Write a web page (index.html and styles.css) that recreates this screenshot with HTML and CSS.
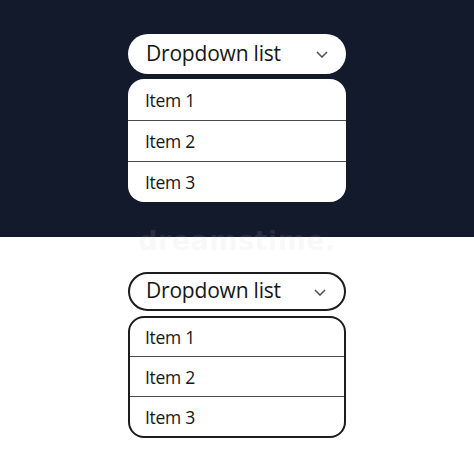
FILE: index.html
```html
<!DOCTYPE html>
<html>
<head>
<meta charset="utf-8">
<link rel="stylesheet" href="styles.css">
</head>
<body>
<div class="page">
  <section class="panel dark">
    <div class="select">
      <span class="label">Dropdown list</span>
      <svg class="chev" width="12" height="7" viewBox="0 0 12 7"><path d="M1 1 L6 6 L11 1" fill="none" stroke="#555" stroke-width="1.6"/></svg>
    </div>
    <ul class="list">
      <li>Item 1</li>
      <li>Item 2</li>
      <li>Item 3</li>
    </ul>
  </section>
  <section class="panel light">
    <div class="select">
      <span class="label">Dropdown list</span>
      <svg class="chev" width="12" height="7" viewBox="0 0 12 7"><path d="M1 1 L6 6 L11 1" fill="none" stroke="#555" stroke-width="1.6"/></svg>
    </div>
    <ul class="list">
      <li>Item 1</li>
      <li>Item 2</li>
      <li>Item 3</li>
    </ul>
  </section>
  <div class="watermark">dreamstime.</div>
</div>
</body>
</html>
```
FILE: styles.css
```css
* { box-sizing: border-box; }
html, body { margin: 0; padding: 0; }
body {
  width: 474px;
  height: 474px;
  overflow: hidden;
  background: #fff;
  font-family: "Open Sans", "Noto Sans", sans-serif;
  color: #161616;
}
.page { position: relative; width: 474px; height: 474px; }
.panel {
  display: flex;
  flex-direction: column;
  align-items: center;
  gap: 5px;
}
.dark {
  background: #131a2b;
  height: 237px;
  padding-top: 34px;
}
.light {
  padding-top: 35px;
  gap: 5px;
}
.select {
  width: 218px;
  height: 40px;
  border-radius: 20px;
  background: #fff;
  display: flex;
  align-items: center;
  justify-content: space-between;
  padding: 0 18px 0 18px;
}
.light .select {
  height: 39px;
  border: 2px solid #1d1d1d;
  padding-left: 16px;
}
.label {
  font-size: 21px;
  letter-spacing: -0.2px;
  line-height: 1;
  margin-top: -2px;
}
.chev { margin-top: 1px; }
.list {
  list-style: none;
  margin: 0;
  padding: 0;
  width: 218px;
  background: #fff;
  border-radius: 16px;
  overflow: hidden;
}
.light .list { border: 2px solid #1d1d1d; }
.list li {
  height: 41px;
  display: flex;
  align-items: center;
  padding-left: 17px;
  font-size: 17.5px;
  letter-spacing: -0.3px;
}
.light .list li { height: 40px; padding-left: 15px; }
.light .list li:first-child { height: 38px; }
.list li + li { border-top: 1.5px solid #4a4a4a; }
.watermark {
  position: absolute;
  left: 0;
  right: 0;
  top: 225px;
  text-align: center;
  font-family: "DejaVu Sans", sans-serif;
  font-weight: bold;
  font-size: 27px;
  letter-spacing: 0.5px;
  color: rgba(200, 200, 205, 0.13);
  pointer-events: none;
}
```
